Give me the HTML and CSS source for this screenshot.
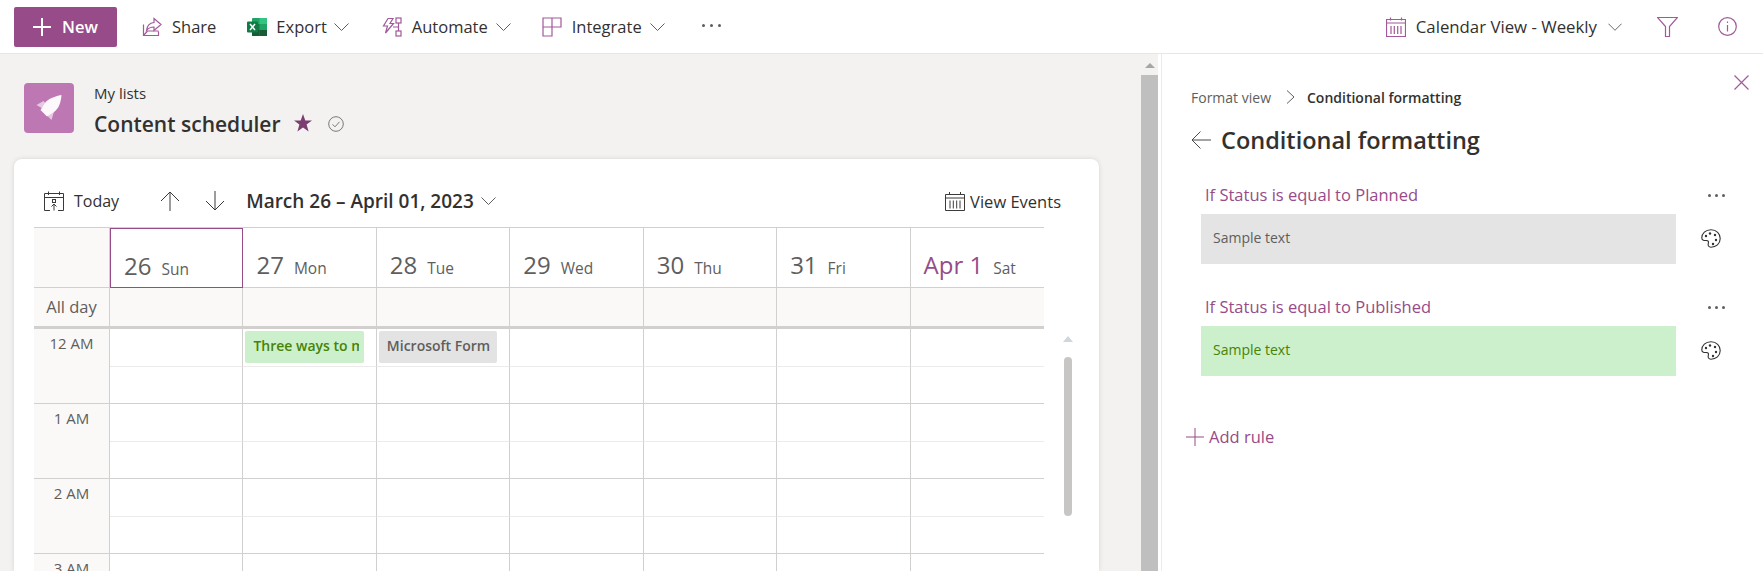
FILE: index.html
```html
<!DOCTYPE html>
<html lang="en">
<head>
    <meta charset="UTF-8">
    <meta name="viewport" content="width=device-width, initial-scale=1.0">
    <title>Content scheduler</title>
    <link rel="stylesheet" href="styles.css">
</head>
<body>

<!-- Command bar -->
<header class="topbar">
    <div class="cmd-group">
        <button class="new-btn">
            <svg width="18" height="18" viewBox="0 0 18 18"><path d="M9 0v18M0 9h18" stroke="#fff" stroke-width="2" fill="none"/></svg>
            New
        </button>
        <div class="cmd cmd-share">
            <svg class="icon" width="20" height="20" viewBox="0 0 20 20"><path d="M1.500 7.500v11h15v-4M1.500 18.500l4-4.500h11" class="ln"/><path d="M12 1.500l7 6-7 6v-3.500c-3.500 0-5.500 1-7.500 3.500 .5-4.500 3-7.500 7.500-8z" class="ln"/></svg>
            <span>Share</span>
        </div>
        <div class="cmd cmd-export">
            <svg width="20" height="20" viewBox="0 0 20 20"><rect x="5" y="1" width="15" height="18" rx="1" fill="#21a366"/><rect x="12.500" y="1" width="7.500" height="6" fill="#33c481"/><rect x="5" y="7" width="7.500" height="6" fill="#107c41"/><rect x="12.500" y="13" width="7.500" height="6" fill="#185c37"/><rect x="5" y="13" width="7.500" height="6" fill="#185c37"/><rect x="0" y="4.500" width="11" height="11" rx="1" fill="#0f7b45"/><path d="M3 7l5 6M8 7l-5 6" stroke="#fff" stroke-width="1.500"/></svg>
            <span>Export</span>
            <svg class="chev" width="15" height="8" viewBox="0 0 15 8"><path d="M.5 .5l7 7 7-7"/></svg>
        </div>
        <div class="cmd cmd-automate">
            <svg class="icon" width="20" height="20" viewBox="0 0 20 20"><path d="M6 1.500h5l-3 5h3.500l-8 9.500 2-7H1.500z" class="ln"/><rect x="14" y="1" width="5" height="5" class="ln"/><rect x="14" y="14" width="5" height="5" class="ln"/><path d="M16.500 6v8M11 10h5.500" class="ln"/></svg>
            <span>Automate</span>
            <svg class="chev" width="15" height="8" viewBox="0 0 15 8"><path d="M.5 .5l7 7 7-7"/></svg>
        </div>
        <div class="cmd cmd-integrate">
            <svg class="icon" width="20" height="20" viewBox="0 0 20 20"><path d="M1 1h18v9h-9v9H1zM10 1v9M1 10h9" class="ln"/></svg>
            <span>Integrate</span>
            <svg class="chev" width="15" height="8" viewBox="0 0 15 8"><path d="M.5 .5l7 7 7-7"/></svg>
        </div>
        <div class="dots cmd-more"><i></i><i></i><i></i></div>
    </div>
    <div class="cmd-group">
        <div class="cmd cmd-view">
            <svg class="icon" width="20" height="20" viewBox="0 0 20 20"><path d="M.5 2.500h19v17H.5zM.5 6h19M4.500 .5v3M15.500 .5v3M5 9v8M8.300 9v8M11.700 9v8M15 9v8" class="ln"/></svg>
            <span>Calendar View - Weekly</span>
            <svg class="chev" width="14" height="8" viewBox="0 0 15 8"><path d="M.5 .5l7 7 7-7"/></svg>
        </div>
        <svg class="icon filter-icon" width="21" height="20" viewBox="0 0 21 20"><path d="M.5 .5h20l-8 9v10h-4v-10z" class="ln"/></svg>
        <svg class="icon info-icon" width="19" height="19" viewBox="0 0 19 19"><circle cx="9.500" cy="9.500" r="8.800" class="ln"/><path d="M9.500 8v6.500M9.500 4.500v1.500" class="ln"/></svg>
    </div>
</header>

<div class="main">
    <!-- List content -->
    <div class="content">
        <div class="list-head">
            <div class="list-tile">
                <svg width="30" height="30" viewBox="0 0 30 30"><path d="M2.500 12L9.500 8l3 3-5 4zM17.500 27l3-10-3-2-5 7z" fill="#e6c8e1"/><path d="M27.500 2C20 3.500 14 6 11 10L6.500 17l6.500 6.500 7-4.500C25 15.500 27 9 27.500 2z" fill="#fdf8fc"/></svg>
            </div>
            <div>
                <div class="list-crumb">My lists</div>
                <div class="list-title">
                    <span>Content scheduler</span>
                    <svg class="star" width="18" height="18" viewBox="0 0 18 18"><path d="M9 0l2.300 6.400H18l-5.400 4.100 2 7L9 13.400 3.400 17.500l2-7L0 6.400h6.700z" fill="#7a3f70"/></svg>
                    <svg class="check" width="16" height="16" viewBox="0 0 16 16"><circle cx="8" cy="8" r="7.300" fill="none" stroke="#7a7876"/><path d="M4.500 8.300l2.500 2.500 4.500-5" fill="none" stroke="#7a7876"/></svg>
                </div>
            </div>
        </div>

        <div class="card">
            <!-- Calendar toolbar -->
            <div class="cal-toolbar">
                <div class="cal-today">
                    <svg width="20" height="20" viewBox="0 0 20 20"><path d="M6 19.500H.5v-17h19v17H14M.5 6.500h19M4.500 .5v3.500M15.500 .5v3.500M10 19.500v-6M7.500 15.500l2.500-2.500 2.500 2.500" fill="none" stroke="#3b3a39"/><rect x="8.500" y="8.500" width="3" height="3" fill="none" stroke="#3b3a39"/></svg>
                    <span>Today</span>
                </div>
                <svg class="arrow-up" width="20" height="20" viewBox="0 0 20 20"><path d="M10 20V1M1 10l9-9 9 9" fill="none" stroke="#3b3a39"/></svg>
                <svg class="arrow-down" width="20" height="20" viewBox="0 0 20 20"><path d="M10 0v19M1 10l9 9 9-9" fill="none" stroke="#3b3a39"/></svg>
                <span class="cal-range">March 26 – April 01, 2023</span>
                <svg class="chev range-chev" width="15" height="8" viewBox="0 0 15 8"><path d="M.5 .5l7 7 7-7"/></svg>
                <div class="view-events">
                    <svg width="20" height="19" viewBox="0 0 20 19"><path d="M.5 2.500h19v16H.5zM.5 6h19M4.500 0v3M15.500 0v3M5 8.500v8M8.300 8.500v8M11.700 8.500v8M15 8.500v8" fill="none" stroke="#3b3a39"/></svg>
                    <span>View Events</span>
                </div>
            </div>

            <div class="cal-wrap">
                <!-- Week grid -->
                <div class="cal-grid">
                    <div class="head head-blank"></div>
                    <div class="head today"><b>26</b><small>Sun</small></div>
                    <div class="head"><b>27</b><small>Mon</small></div>
                    <div class="head"><b>28</b><small>Tue</small></div>
                    <div class="head"><b>29</b><small>Wed</small></div>
                    <div class="head"><b>30</b><small>Thu</small></div>
                    <div class="head"><b>31</b><small>Fri</small></div>
                    <div class="head"><b class="month-first">Apr 1</b><small>Sat</small></div>

                    <div class="allday allday-label">All day</div>
                    <div class="allday"></div><div class="allday"></div><div class="allday"></div><div class="allday"></div><div class="allday"></div><div class="allday"></div><div class="allday"></div>

                    <div class="time">12 AM</div>
                    <div class="cell"></div>
                    <div class="cell"><div class="event event-green"><div class="event-text">Three ways to m</div></div></div>
                    <div class="cell"><div class="event event-gray"><div class="event-text">Microsoft Form</div></div></div>
                    <div class="cell"></div><div class="cell"></div><div class="cell"></div><div class="cell"></div>

                    <div class="time hour"></div>
                    <div class="cell hour"></div><div class="cell hour"></div><div class="cell hour"></div><div class="cell hour"></div><div class="cell hour"></div><div class="cell hour"></div><div class="cell hour"></div>

                    <div class="time">1 AM</div>
                    <div class="cell"></div><div class="cell"></div><div class="cell"></div><div class="cell"></div><div class="cell"></div><div class="cell"></div><div class="cell"></div>

                    <div class="time hour"></div>
                    <div class="cell hour"></div><div class="cell hour"></div><div class="cell hour"></div><div class="cell hour"></div><div class="cell hour"></div><div class="cell hour"></div><div class="cell hour"></div>

                    <div class="time">2 AM</div>
                    <div class="cell"></div><div class="cell"></div><div class="cell"></div><div class="cell"></div><div class="cell"></div><div class="cell"></div><div class="cell"></div>

                    <div class="time hour"></div>
                    <div class="cell hour"></div><div class="cell hour"></div><div class="cell hour"></div><div class="cell hour"></div><div class="cell hour"></div><div class="cell hour"></div><div class="cell hour"></div>

                    <div class="time">3 AM</div>
                    <div class="cell"></div><div class="cell"></div><div class="cell"></div><div class="cell"></div><div class="cell"></div><div class="cell"></div><div class="cell"></div>
                </div>

                <div class="cal-scroll">
                    <div class="cal-scroll-arrow"></div>
                    <div class="cal-scroll-thumb"></div>
                </div>
            </div>
        </div>
    </div>

    <!-- Page scrollbar -->
    <div class="page-scroll">
        <div class="page-scroll-arrow"></div>
        <div class="page-scroll-thumb"></div>
    </div>

    <!-- Format panel -->
    <aside class="panel">
        <div class="panel-crumbs">
            <span class="crumb-link">Format view</span>
            <svg width="9" height="14" viewBox="0 0 9 14"><path d="M1 .5l7 6.500-7 6.500" fill="none" stroke="#605e5c"/></svg>
            <span class="crumb-current">Conditional formatting</span>
            <svg class="panel-close" width="15" height="15" viewBox="0 0 15 15"><path d="M.5 .5l14 14M14.500 .5l-14 14" class="ln"/></svg>
        </div>
        <div class="panel-title">
            <svg width="20" height="18" viewBox="0 0 20 18"><path d="M20 9H1M9.500 .5L1 9l8.500 8.500" fill="none" stroke="#4a4948"/></svg>
            <h2>Conditional formatting</h2>
        </div>

        <div class="rule">
            <div class="rule-top">
                <span class="rule-name">If Status is equal to Planned</span>
                <div class="dots rule-dots"><i></i><i></i><i></i></div>
            </div>
            <div class="rule-row">
                <div class="sample sample-gray">Sample text</div>
                <svg class="palette" width="20" height="20" viewBox="0 0 20 20"><path d="M10 .8C4.500 .8 .8 4.500 .8 9c0 2.500 2.700 2.700 4.200 2.500 2-.2 3 1 2.300 3-.6 1.800 .2 3.700 2.700 3.700 5 0 9.200-3.200 9.200-8.700C19.200 4.500 15.500 .8 10 .8z" fill="none" stroke="#323130" stroke-width="1.100"/><circle cx="5" cy="7" r="1.200" fill="#323130"/><circle cx="9" cy="4.500" r="1.200" fill="#323130"/><circle cx="14" cy="6" r="1.200" fill="#323130"/><circle cx="15" cy="11" r="1.200" fill="#323130"/><circle cx="12" cy="15" r="1.200" fill="#323130"/></svg>
            </div>
        </div>
        <div class="rule">
            <div class="rule-top">
                <span class="rule-name">If Status is equal to Published</span>
                <div class="dots rule-dots"><i></i><i></i><i></i></div>
            </div>
            <div class="rule-row">
                <div class="sample sample-green">Sample text</div>
                <svg class="palette" width="20" height="20" viewBox="0 0 20 20"><path d="M10 .8C4.500 .8 .8 4.500 .8 9c0 2.500 2.700 2.700 4.200 2.500 2-.2 3 1 2.300 3-.6 1.800 .2 3.700 2.700 3.700 5 0 9.200-3.200 9.200-8.700C19.200 4.500 15.500 .8 10 .8z" fill="none" stroke="#323130" stroke-width="1.100"/><circle cx="5" cy="7" r="1.200" fill="#323130"/><circle cx="9" cy="4.500" r="1.200" fill="#323130"/><circle cx="14" cy="6" r="1.200" fill="#323130"/><circle cx="15" cy="11" r="1.200" fill="#323130"/><circle cx="12" cy="15" r="1.200" fill="#323130"/></svg>
            </div>
        </div>

        <div class="add-rule">
            <svg width="18" height="18" viewBox="0 0 18 18"><path d="M9 0v18M0 9h18" fill="none" stroke="#974b88"/></svg>
            <span>Add rule</span>
        </div>
    </aside>
</div>

</body>
</html>
```

FILE: styles.css
```css
* {
    box-sizing: border-box;
}
html, body {
    height: 100%;
}
body {
    margin: 0;
    font-family: "Open Sans", "Noto Sans", sans-serif;
    color: #323130;
    background-color: #fff;
    overflow: hidden;
    display: flex;
    flex-direction: column;
}
svg {
    display: block;
    flex: none;
}
.ln {
    fill: none;
    stroke: #a2589a;
    stroke-width: 1.2;
}
.chev path {
    fill: none;
    stroke: #605e5c;
    stroke-width: 1;
}

/* Command bar */
.topbar {
    height: 54px;
    flex: none;
    display: flex;
    justify-content: space-between;
    align-items: center;
    border-bottom: 1px solid #e8e6e4;
    padding: 0 26px 0 14px;
    font-size: 16.5px;
}
.cmd-group {
    display: flex;
    align-items: center;
}
.new-btn {
    width: 103px;
    height: 40px;
    display: flex;
    align-items: center;
    justify-content: center;
    gap: 11px;
    background-color: #974b88;
    color: #fff;
    border: none;
    border-radius: 2px;
    font-family: inherit;
    font-size: 16.5px;
    font-weight: 600;
}
.cmd {
    display: flex;
    align-items: center;
    gap: 10px;
    color: #323130;
}
.cmd .chev {
    margin-left: -2px;
}
.cmd-share {
    margin-left: 25px;
}
.cmd-export {
    margin-left: 31px;
    gap: 9px;
}
.cmd-automate {
    margin-left: 33px;
}
.cmd-integrate {
    margin-left: 31px;
}
.cmd-view {
    font-size: 16.8px;
}
.cmd-view .chev {
    margin-left: 1px;
}
.dots {
    display: flex;
    gap: 5px;
}
.dots i {
    width: 3px;
    height: 3px;
    border-radius: 50%;
    background-color: #605e5c;
}
.cmd-more {
    margin-left: 37px;
    margin-bottom: 2px;
}
.filter-icon {
    margin-left: 35px;
}
.info-icon {
    margin-left: 40px;
}

/* Left side */
.main {
    flex: 1;
    min-height: 0;
    display: flex;
}
.content {
    width: 1141px;
    flex: none;
    background-color: #f3f2f1;
    padding: 29px 0 0 14px;
    display: flex;
    flex-direction: column;
}
.list-head {
    display: flex;
    margin-left: 10px;
    height: 50px;
    gap: 20px;
}
.list-tile {
    width: 50px;
    height: 50px;
    border-radius: 4px;
    background-color: #bd77b2;
    display: flex;
    align-items: center;
    justify-content: center;
}
.list-crumb {
    font-size: 15px;
    line-height: 20px;
}
.list-title {
    display: flex;
    align-items: center;
    font-size: 21px;
    font-weight: 600;
    line-height: 30px;
    margin-top: 6px;
}
.star {
    margin: -2px 0 0 13px;
}
.check {
    margin-left: 16px;
}
.card {
    width: 1085px;
    flex: 1;
    min-height: 0;
    margin-top: 26px;
    padding-left: 20px;
    background-color: #fff;
    border-radius: 8px 8px 0 0;
    box-shadow: 0 0 5px rgba(0, 0, 0, 0.12);
    overflow: hidden;
}
.cal-toolbar {
    height: 68px;
    display: flex;
    align-items: center;
    padding: 16px 0 0 10px;
    font-size: 16px;
}
.cal-today {
    display: flex;
    align-items: center;
    gap: 10px;
}
.arrow-up {
    margin-left: 41px;
}
.arrow-down {
    margin-left: 25px;
}
.cal-range {
    margin-left: 21px;
    font-size: 19px;
    font-weight: 600;
}
.range-chev {
    margin-left: 7px;
}
.view-events {
    margin-left: auto;
    margin-right: 38px;
    display: flex;
    align-items: center;
    gap: 5px;
    font-size: 16.5px;
}
.cal-wrap {
    display: flex;
}
.cal-grid {
    width: 1010px;
    flex: none;
    display: grid;
    grid-template-columns: 76px repeat(7, 1fr);
    grid-template-rows: 60px 41px;
    grid-auto-rows: 37.5px;
    border-top: 1px solid #d2d0ce;
}
.head, .allday, .time, .cell {
    border-right: 1px solid #d2d0ce;
    min-width: 0;
}
.head {
    display: flex;
    align-items: baseline;
    gap: 10px;
    padding: 21px 0 0 13px;
    border-bottom: 1px solid #d2d0ce;
    color: #605e5c;
}
.head:nth-child(8), .allday:nth-child(16), .cell:nth-child(8n) {
    border-right: none;
}
.head b {
    font-size: 24px;
    font-weight: 400;
    line-height: 32px;
}
.head small {
    font-size: 15.5px;
}
.head .month-first {
    color: #974b88;
}
.head-blank {
    background-color: #faf9f8;
}
.today {
    border: 1px solid #974b88;
}
.allday {
    background-color: #faf9f8;
    border-bottom: 3px solid #d2d0ce;
}
.allday-label {
    color: #605e5c;
    font-size: 16.5px;
    line-height: 38px;
    text-align: center;
}
.time {
    background-color: #faf9f8;
    color: #605e5c;
    font-size: 15px;
    line-height: 20px;
    padding-top: 4px;
    text-align: center;
}
.time.hour, .cell.hour {
    border-bottom: 1px solid #d2d0ce;
}
.cell {
    border-bottom: 1px solid #edebe9;
}
.event {
    height: 32px;
    margin: 2px 12px 0 2px;
    padding: 0 5px 0 8px;
    border-radius: 2px;
    font-size: 14px;
    font-weight: 600;
    line-height: 30px;
}
.event-text {
    white-space: nowrap;
    overflow: hidden;
}
.event-green {
    background-color: #ccf0cb;
    color: #498205;
}
.event-gray {
    background-color: #e3e3e3;
    color: #605e5c;
}
.cal-scroll {
    margin-left: 19px;
    width: 10px;
    padding-top: 109px;
}
.cal-scroll-arrow {
    width: 0;
    border-left: 5px solid transparent;
    border-right: 5px solid transparent;
    border-bottom: 6px solid #d0d6da;
}
.cal-scroll-thumb {
    width: 8px;
    height: 159px;
    margin: 15px 0 0 1px;
    border-radius: 4px;
    background-color: #c8c6c4;
}

/* Page scrollbar */
.page-scroll {
    width: 17px;
    flex: none;
    background-color: #f3f2f1;
    padding-top: 9px;
}
.page-scroll-arrow {
    width: 0;
    margin: 0 auto;
    border-left: 5px solid transparent;
    border-right: 5px solid transparent;
    border-bottom: 5px solid #a6a6a6;
}
.page-scroll-thumb {
    height: 100%;
    margin-top: 7px;
    background-color: #bfbfbf;
}

/* Format panel */
.panel {
    flex: 1;
    margin-left: 3px;
    border-left: 1px solid #edebe9;
    background-color: #fff;
    padding: 0 0 0 23px;
}
.panel-crumbs {
    display: flex;
    align-items: center;
    height: 20px;
    margin: 33px 0 0 6px;
    font-size: 14px;
}
.crumb-link {
    color: #605e5c;
}
.panel-crumbs svg {
    margin: 0 12px 0 15px;
}
.crumb-current {
    font-weight: 600;
}
.panel-crumbs .panel-close {
    margin: -30px 0 0 273px;
}
.panel-title {
    display: flex;
    align-items: center;
    gap: 10px;
    margin: 16px 0 0 6px;
    height: 34px;
}
.panel-title h2 {
    margin: 0;
    font-size: 23.5px;
    font-weight: 600;
}
.rule {
    margin: 0 0 0 16px;
}
.rule-top {
    display: flex;
    align-items: center;
    justify-content: space-between;
    height: 24px;
    padding: 0 38px 0 4px;
    margin-top: 26px;
}
.rule + .rule .rule-top {
    margin-top: 31px;
}
.rule-name {
    color: #974b88;
    font-size: 16.5px;
    margin-top: -2px;
}
.rule-dots {
    gap: 4px;
}
.rule-row {
    display: flex;
    align-items: center;
    margin-top: 7px;
}
.sample {
    width: 475px;
    height: 50px;
    padding: 14px 12px 0;
    font-size: 14px;
    line-height: 20px;
}
.sample-gray {
    background-color: #e4e4e4;
    color: #605e5c;
}
.sample-green {
    background-color: #ccf0cb;
    color: #498205;
}
.palette {
    margin-left: 25px;
}
.add-rule {
    display: flex;
    align-items: center;
    gap: 5px;
    margin: 49px 0 0 1px;
    color: #974b88;
    font-size: 16.5px;
}
```
